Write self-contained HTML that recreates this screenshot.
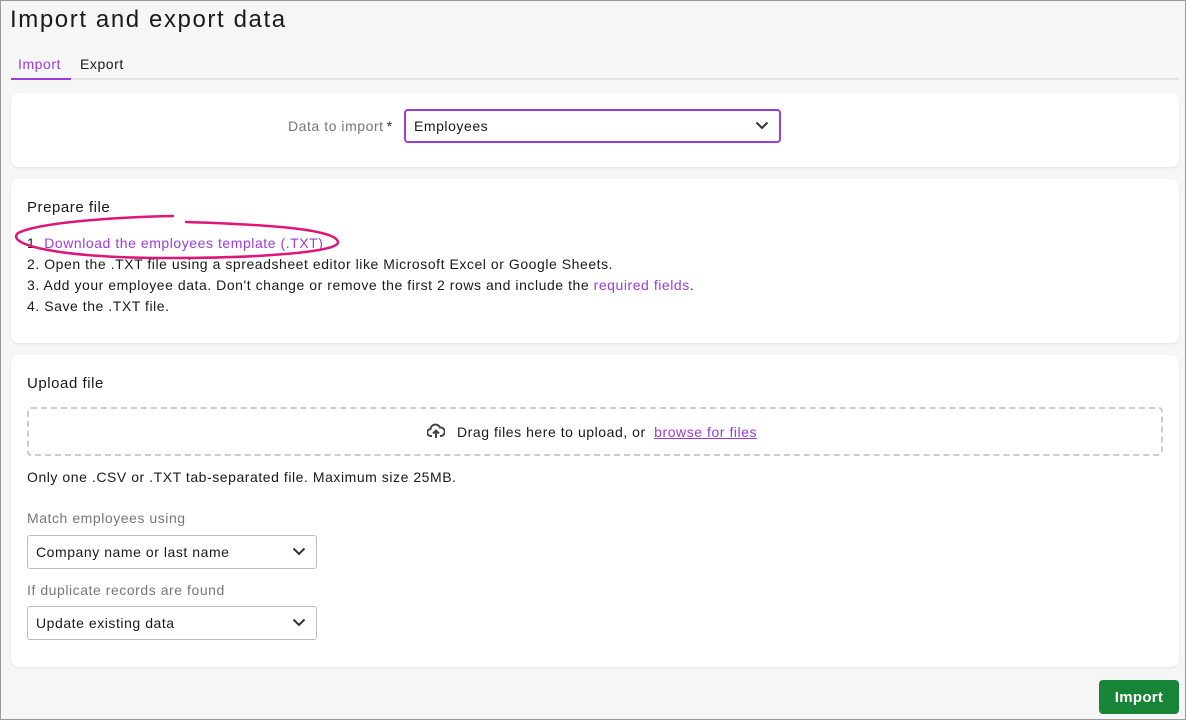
<!DOCTYPE html>
<html><head><style>
*{box-sizing:border-box;margin:0;padding:0}
body{width:1186px;height:720px;background:#f6f6f6;font-family:"Liberation Sans",sans-serif;color:#1a1a1a;position:relative;overflow:hidden;border:1px solid #9a9a9a;letter-spacing:0.55px}
.abs{position:absolute}
.card{position:absolute;left:10px;width:1168px;background:#fff;border-radius:8px;box-shadow:0 1px 2px rgba(0,0,0,.08)}
.sel{position:absolute;background:#fff;border:1px solid #bbb;border-radius:3px;font-size:14px;padding-left:8px;display:flex;align-items:center}
.chev{position:absolute;right:10px;top:50%;margin-top:-5px}
.purple{color:#9b3cdc}
</style></head><body>
<div class="abs" style="left:9px;top:5px;font-size:24px;letter-spacing:1.6px">Import and export data</div>
<div class="abs purple" style="left:17px;top:55px;font-size:14px;">Import</div>
<div class="abs" style="left:79px;top:55px;font-size:14px;">Export</div>
<div class="abs" style="left:10px;top:77px;width:1168px;height:2px;background:#e2e2e2"></div>
<div class="abs" style="left:10px;top:77px;width:60px;height:2px;background:#9b3cdc"></div>

<div class="card" style="top:92px;height:74px;">
  <div class="abs" style="left:277px;top:25px;font-size:14px;color:#777">Data to import<span style="color:#333;margin-left:3px">*</span></div>
  <div class="sel" style="left:393px;top:16px;width:377px;height:34px;border:2px solid #9b3cdc;border-radius:4px">Employees
  <svg class="chev" width="14" height="9" viewBox="0 0 14 9"><path d="M1.5 1.5L7 7l5.5-5.5" fill="none" stroke="#333" stroke-width="2"/></svg></div>
</div>

<div class="card" style="top:178px;height:164px;">
  <div class="abs" style="left:16px;top:20px;font-size:15px;">Prepare file</div>
  <div class="abs" style="left:16px;top:54px;font-size:14px;line-height:21px;">
  1. <span class="purple">Download the employees template (.TXT)</span><br>
  2. Open the .TXT file using a spreadsheet editor like Microsoft Excel or Google Sheets.<br>
  3. Add your employee data. Don't change or remove the first 2 rows and include the <span class="purple">required fields</span>.<br>
  4. Save the .TXT file.</div>
</div>
<svg class="abs" style="left:-1px;top:-1px" width="400" height="280"><path d="M173 216 C120 217 40 222 18 233 C5 245 60 258 170 258 C260 258 340 252 338 242 C335 230 280 225 186 222" fill="none" stroke="#e0157a" stroke-width="2.5" stroke-linecap="round"/></svg>

<div class="card" style="top:354px;height:312px;">
  <div class="abs" style="left:16px;top:20px;font-size:15px;">Upload file</div>
  <div class="abs" style="left:16px;top:52px;width:1136px;height:49px;border:2px dashed #ccc;border-radius:4px"></div>
  <svg class="abs" style="left:416px;top:68px" width="18" height="16" viewBox="0 0 18 16"><path d="M5 13H4a3.5 3.5 0 0 1-.5-7A5 5 0 0 1 13 4.5a4 4 0 0 1 1 8.5h-1" fill="none" stroke="#444" stroke-width="2"/><path d="M9 15V8M6 10.5l3-3 3 3" fill="none" stroke="#444" stroke-width="2"/></svg>
  <div class="abs" style="left:446px;top:69px;font-size:14px;">Drag files here to upload, or <span class="purple" style="text-decoration:underline;margin-left:4px">browse for files</span></div>
  <div class="abs" style="left:16px;top:114px;font-size:14px;">Only one .CSV or .TXT tab-separated file. Maximum size 25MB.</div>
  <div class="abs" style="left:16px;top:155px;font-size:14px;color:#777">Match employees using</div>
  <div class="sel" style="left:16px;top:180px;width:290px;height:34px">Company name or last name
  <svg class="chev" width="14" height="9" viewBox="0 0 14 9"><path d="M1.5 1.5L7 7l5.5-5.5" fill="none" stroke="#333" stroke-width="2"/></svg></div>
  <div class="abs" style="left:16px;top:227px;font-size:14px;color:#777">If duplicate records are found</div>
  <div class="sel" style="left:16px;top:251px;width:290px;height:34px">Update existing data
  <svg class="chev" width="14" height="9" viewBox="0 0 14 9"><path d="M1.5 1.5L7 7l5.5-5.5" fill="none" stroke="#333" stroke-width="2"/></svg></div>
</div>

<div class="abs" style="left:1098px;top:679px;width:80px;height:34px;background:#188438;border-radius:4px;color:#fff;font-size:15px;font-weight:bold;display:flex;align-items:center;justify-content:center;letter-spacing:0.3px">Import</div>
</body></html>
